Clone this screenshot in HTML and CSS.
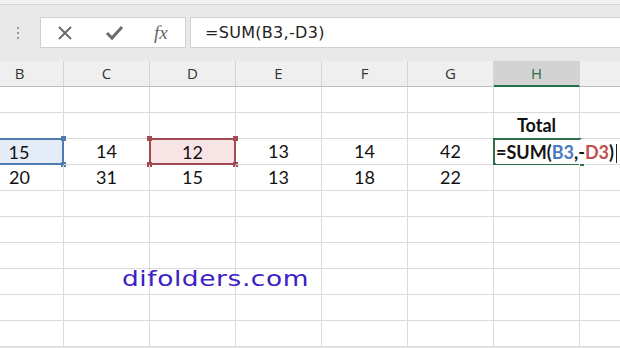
FILE: index.html
```html
<!DOCTYPE html>
<html lang="en">
<head>
    <meta charset="UTF-8">
    <title>SUM with minus</title>
    <link rel="stylesheet" href="styles.css">
</head>
<body>
    <div class="topstrip"></div>
    <div class="formula-row">
        <div class="grip"><span></span><span></span><span></span></div>
        <div class="fx-buttons">
            <svg class="icon" width="18" height="18" viewBox="0 0 18 18">
                <path d="M3 3 L15 15 M15 3 L3 15" stroke="#6b6b6b" stroke-width="2" fill="none"/>
            </svg>
            <svg class="icon" width="20" height="18" viewBox="0 0 20 18">
                <path d="M2 9 L7 14 L17 3" stroke="#6b6b6b" stroke-width="3" fill="none"/>
            </svg>
            <span class="fx">fx</span>
        </div>
        <div class="formula-input">=SUM(B3,-D3)</div>
    </div>

    <div class="sheet">
        <div class="head">B</div>
        <div class="head">C</div>
        <div class="head">D</div>
        <div class="head">E</div>
        <div class="head">F</div>
        <div class="head">G</div>
        <div class="head active">H</div>
        <div class="head"></div>

        <!-- row 1 -->
        <div class="cell"></div><div class="cell"></div><div class="cell"></div><div class="cell"></div>
        <div class="cell"></div><div class="cell"></div><div class="cell"></div><div class="cell"></div>

        <!-- row 2 -->
        <div class="cell"></div><div class="cell"></div><div class="cell"></div><div class="cell"></div>
        <div class="cell"></div><div class="cell"></div><div class="cell bold">Total</div><div class="cell"></div>

        <!-- row 3 -->
        <div class="cell ref-blue">15<i class="handle tr"></i><i class="handle br"></i></div>
        <div class="cell">14</div>
        <div class="cell ref-red">12<i class="handle tl"></i><i class="handle tr"></i><i class="handle bl"></i><i class="handle br"></i></div>
        <div class="cell">13</div>
        <div class="cell">14</div>
        <div class="cell">42</div>
        <div class="cell editing"><i class="fill-handle"></i><span class="edit-text">=SUM(<span class="blue">B3</span>,-<span class="red">D3</span>)<span class="caret"></span></span></div>
        <div class="cell"></div>

        <!-- row 4 -->
        <div class="cell">20</div>
        <div class="cell">31</div>
        <div class="cell">15</div>
        <div class="cell">13</div>
        <div class="cell">18</div>
        <div class="cell">22</div>
        <div class="cell"></div>
        <div class="cell"></div>

        <!-- rows 5-10 -->
        <div class="cell"></div><div class="cell"></div><div class="cell"></div><div class="cell"></div>
        <div class="cell"></div><div class="cell"></div><div class="cell"></div><div class="cell"></div>
        <div class="cell"></div><div class="cell"></div><div class="cell"></div><div class="cell"></div>
        <div class="cell"></div><div class="cell"></div><div class="cell"></div><div class="cell"></div>
        <div class="cell"></div><div class="cell"></div><div class="cell"></div><div class="cell"></div>
        <div class="cell"></div><div class="cell"></div><div class="cell"></div><div class="cell"></div>
        <div class="cell"></div><div class="cell"></div><div class="cell"></div><div class="cell"></div>
        <div class="cell"></div><div class="cell"></div><div class="cell"></div><div class="cell"></div>
        <div class="cell"></div><div class="cell"></div><div class="cell"></div><div class="cell"></div>
        <div class="cell"></div><div class="cell"></div><div class="cell"></div><div class="cell"></div>
        <div class="cell"></div><div class="cell"></div><div class="cell"></div><div class="cell"></div>
        <div class="cell"></div><div class="cell"></div><div class="cell"></div><div class="cell"></div>

        <div class="watermark">difolders.com</div>
    </div>
</body>
</html>
```

FILE: styles.css
```css
body {
    margin: 0;
    width: 620px;
    height: 348px;
    overflow: hidden;
    background-color: #e9e9e9;
    font-family: "Open Sans", sans-serif;
}

.topstrip {
    height: 4px;
    background-color: #f2f2f2;
    border-bottom: 1px solid #d6d6d6;
}

.formula-row {
    display: flex;
    align-items: stretch;
    height: 31px;
    padding: 12px 0 13px 0;
}

.grip {
    width: 40px;
    display: flex;
    flex-direction: column;
    align-items: center;
    justify-content: center;
    gap: 3px;
}

.grip span {
    width: 2px;
    height: 2px;
    background-color: #9a9a9a;
    margin-left: -4px;
}

.fx-buttons {
    width: 146px;
    background-color: #fff;
    border: 1px solid #d0d0d0;
    display: flex;
    align-items: center;
    padding-left: 15px;
    gap: 31px;
    box-sizing: border-box;
    height: 31px;
}

.fx {
    font-family: "Liberation Serif", serif;
    font-style: italic;
    font-size: 19px;
    color: #666;
    margin-left: -2px;
}

.formula-input {
    flex: 1;
    margin-left: 4px;
    background-color: #fff;
    border: 1px solid #d0d0d0;
    border-right: none;
    box-sizing: border-box;
    height: 31px;
    padding: 5px 0 0 14px;
    font-family: "DejaVu Sans", sans-serif;
    font-size: 16px;
    letter-spacing: 0.3px;
    color: #222;
}

.sheet {
    position: relative;
    display: grid;
    grid-template-columns: 64px repeat(7, 86px);
    grid-auto-rows: 26px;
    width: 620px;
    overflow: hidden;
    background-color: #fff;
}

.head {
    background-color: #efefef;
    border-right: 1px solid #d3d3d3;
    border-bottom: 1px solid #bcbcbc;
    text-align: center;
    font-size: 15px;
    line-height: 25px;
    color: #333;
}

.head:first-child {
    padding-right: 24px;
}

.head.active {
    background-color: #d3d3d3;
    color: #2d6b47;
    border-bottom: 2px solid #217346;
    line-height: 24px;
}

.cell {
    position: relative;
    border-right: 1px solid #dadada;
    border-bottom: 1px solid #dadada;
    text-align: center;
    font-family: Lato, sans-serif;
    font-size: 18px;
    line-height: 25px;
    color: #111;
}

.cell:nth-child(8n+1) {
    padding-right: 24px;
}

.bold {
    font-weight: bold;
}

.ref-blue {
    background-color: #e4ecf7;
    border: 2px solid #4f7bb0;
    border-left: none;
    margin-top: -1px;
    line-height: 24px;
}

.ref-red {
    background-color: #f8e3e5;
    border: 2px solid #a34b52;
    margin: -1px 0 0 -1px;
    line-height: 24px;
}

.handle {
    position: absolute;
    width: 5px;
    height: 5px;
}

.ref-blue .handle { background-color: #4f7bb0; }
.ref-red .handle { background-color: #a34b52; }

.handle.tl { left: -4px; top: -4px; }
.handle.tr { right: -4px; top: -4px; }
.handle.bl { left: -4px; bottom: -4px; }
.handle.br { right: -4px; bottom: -4px; }

.editing {
    border: 2px solid #2f6f49;
    border-right-color: transparent;
    margin: -1px -2px 0 -1px;
    text-align: left;
    white-space: nowrap;
    font-weight: bold;
    line-height: 24px;
    padding-left: 1px;
    z-index: 2;
}

.edit-text {
    position: relative;
    z-index: 3;
    display: inline-block;
    background-color: #fff;
    padding-right: 2px;
}

.blue { color: #4a7ac0; }
.red { color: #c0504d; }

.caret {
    display: inline-block;
    width: 1px;
    height: 19px;
    background-color: #222;
    margin-left: 2px;
    vertical-align: -4px;
}

.fill-handle {
    position: absolute;
    left: 84px;
    bottom: -4px;
    width: 4px;
    height: 4px;
    background-color: #2f6f49;
    border: 1px solid #fff;
}

.watermark {
    position: absolute;
    left: 122px;
    top: 205px;
    font-family: "DejaVu Sans", sans-serif;
    font-size: 22px;
    letter-spacing: 0.5px;
    color: #3a20c6;
    transform: scaleX(1.2);
    transform-origin: left top;
}
```
